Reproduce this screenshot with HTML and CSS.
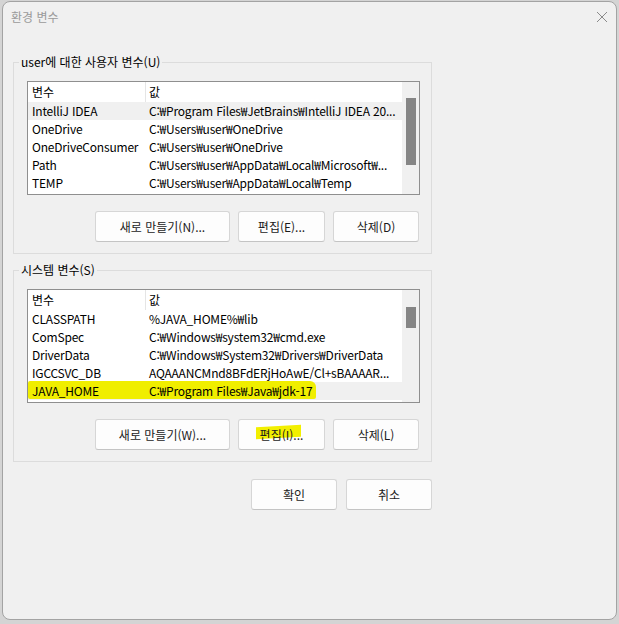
FILE: index.html
```html
<!DOCTYPE html>
<html lang="ko">
<head>
<meta charset="utf-8">
<title>환경 변수</title>
<link rel="stylesheet" href="styles.css">
</head>
<body>
<div class="window">
  <div class="titlebar">
    <span class="title">환경 변수</span>
    <svg class="close" width="12" height="12" viewBox="0 0 12 12"><path d="M1 1 L11 11 M11 1 L1 11" stroke="#8a8a8a" stroke-width="1" fill="none"/></svg>
  </div>
  <div class="content">
    <div class="group">
      <span class="group-label">user에 대한 사용자 변수(U)</span>
      <div class="list">
        <div class="table">
          <div class="row head"><span class="c1">변수</span><span class="c2">값</span></div>
          <div class="row sel"><span class="c1">IntelliJ IDEA</span><span class="c2">C:₩Program Files₩JetBrains₩IntelliJ IDEA 20...</span></div>
          <div class="row"><span class="c1">OneDrive</span><span class="c2">C:₩Users₩user₩OneDrive</span></div>
          <div class="row"><span class="c1">OneDriveConsumer</span><span class="c2">C:₩Users₩user₩OneDrive</span></div>
          <div class="row"><span class="c1">Path</span><span class="c2">C:₩Users₩user₩AppData₩Local₩Microsoft₩...</span></div>
          <div class="row"><span class="c1">TEMP</span><span class="c2">C:₩Users₩user₩AppData₩Local₩Temp</span></div>
        </div>
        <div class="scrollbar"><div class="thumb thumb-user"></div></div>
      </div>
      <div class="buttons">
        <button class="btn wide">새로 만들기(N)...</button>
        <button class="btn mid">편집(E)...</button>
        <button class="btn">삭제(D)</button>
      </div>
    </div>

    <div class="group sys">
      <span class="group-label">시스템 변수(S)</span>
      <div class="list">
        <div class="table">
          <div class="row head"><span class="c1">변수</span><span class="c2">값</span></div>
          <div class="row"><span class="c1">CLASSPATH</span><span class="c2">%JAVA_HOME%₩lib</span></div>
          <div class="row"><span class="c1">ComSpec</span><span class="c2">C:₩Windows₩system32₩cmd.exe</span></div>
          <div class="row"><span class="c1">DriverData</span><span class="c2">C:₩Windows₩System32₩Drivers₩DriverData</span></div>
          <div class="row"><span class="c1">IGCCSVC_DB</span><span class="c2">AQAAANCMnd8BFdERjHoAwE/Cl+sBAAAAR...</span></div>
          <div class="row sel"><span class="marker"></span><span class="c1">JAVA_HOME</span><span class="c2">C:₩Program Files₩Java₩jdk-17</span></div>
        </div>
        <div class="scrollbar"><div class="thumb thumb-sys"></div></div>
      </div>
      <div class="buttons">
        <button class="btn wide">새로 만들기(W)...</button>
        <button class="btn mid marked"><span class="btn-mark"></span><span class="btn-text">편집(I)...</span></button>
        <button class="btn">삭제(L)</button>
      </div>
    </div>

    <div class="dialog-buttons">
      <button class="btn">확인</button>
      <button class="btn">취소</button>
    </div>
  </div>
</div>
</body>
</html>
```
FILE: styles.css
```css
* { box-sizing: border-box; }
html, body { margin: 0; padding: 0; }
body {
  width: 619px;
  height: 624px;
  background: #d4d4d4;
  font-family: "Noto Sans CJK KR", "Noto Sans", sans-serif;
  font-size: 12px;
  color: #000;
  padding: 1px 2px 0 2px;
  overflow: hidden;
}
.window {
  width: 615px;
  height: 619px;
  background: #f0f0f0;
  border: 1px solid #a3a3a3;
  border-radius: 8px;
  overflow: hidden;
}
.titlebar {
  height: 30px;
  display: flex;
  align-items: center;
  justify-content: space-between;
  padding: 0 8px 0 8px;
}
.title {
  color: #9a9a9a;
  font-size: 12px;
  line-height: 16px;
}
.close { display: block; }
.content {
  padding: 30px 0 0 10px;
}
.group {
  position: relative;
  width: 419px;
  border: 1px solid #dcdcdc;
  padding: 18px 11px 11px 13px;
}
.group.sys { margin-top: 16px; }
.group-label {
  position: absolute;
  top: -9px;
  left: 5px;
  padding: 0 2px;
  background: #f0f0f0;
  line-height: 16px;
  color: #000;
}
.list {
  display: flex;
  height: 114px;
  border: 1px solid #8f8f8f;
  background: #fff;
}
.table { flex: 1; min-width: 0; }
.scrollbar {
  width: 17px;
  background: #f0f0f0;
  padding: 0 3px 0 4px;
}
.thumb { background: #858585; }
.thumb-user { margin-top: 16px; height: 67px; }
.thumb-sys { margin-top: 17px; height: 21px; }
.row {
  position: relative;
  display: flex;
  height: 18px;
  line-height: 18px;
  white-space: nowrap;
  letter-spacing: -0.2px;
}
.row.head { height: 20px; line-height: 20px; letter-spacing: 0; }
.row.sel { background: #f0f0f0; }
.c1 {
  position: relative;
  width: 118px;
  padding-left: 4px;
  overflow: hidden;
}
.head .c1 { border-right: 1px solid #e5e5e5; }
.c2 {
  position: relative;
  flex: 1;
  padding-left: 3px;
  overflow: hidden;
}
.marker {
  position: absolute;
  left: 0;
  top: -1px;
  width: 288px;
  height: 18px;
  background: #f0ee00;
  border-radius: 2px 6px 2px 2px;
}
.buttons {
  display: flex;
  justify-content: flex-end;
  gap: 8px;
  margin-top: 16px;
  padding-right: 1px;
}
.btn {
  position: relative;
  width: 86px;
  height: 31px;
  background: #fdfdfd;
  border: 1px solid #d6d6d6;
  border-bottom-color: #c4c4c4;
  border-radius: 3px;
  font-family: inherit;
  font-size: 12px;
  color: #1b1b1b;
  padding: 0;
  line-height: 16px;
}
.btn.wide { width: 135px; }
.btn.mid { width: 87px; }
.btn-mark {
  position: absolute;
  left: 17px;
  top: 6px;
  width: 45px;
  height: 12px;
  background: #f2ef00;
  transform: skewY(-3deg);
}
.btn-text { position: relative; }
.dialog-buttons {
  display: flex;
  justify-content: flex-start;
  gap: 9px;
  margin-top: 17px;
  padding-left: 238px;
}
```
